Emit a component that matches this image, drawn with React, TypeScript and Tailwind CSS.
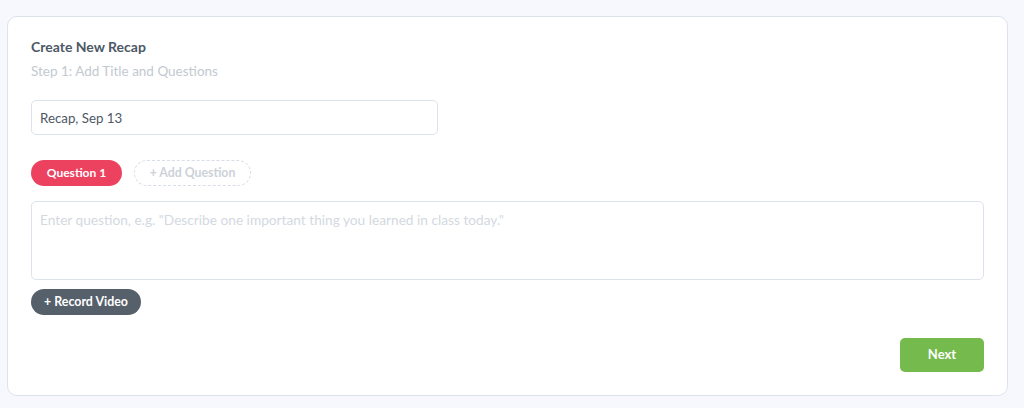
export default function App() {
  return (
    <div className="min-h-screen bg-[#f6f8fd] pl-[7px] pt-[16px] font-['Lato','Open_Sans',sans-serif]">
      <div className="w-[1001px] h-[380px] bg-white border border-[#dde3ec] rounded-[10px] px-[23px] pt-[22px] flex flex-col">
        {/* Header */}
        <h1 className="text-[14px] font-bold text-[#4d5866] leading-[16px]">Create New Recap</h1>
        <p className="text-[13.5px] text-[#c3c9d0] leading-[16px] mt-[8px]">Step 1: Add Title and Questions</p>

        {/* Title input */}
        <input
          defaultValue="Recap, Sep 13"
          className="mt-[21px] w-[407px] h-[35px] border border-[#dde3ec] rounded-[5px] px-[8px] text-[13.3px] text-[#4d5866] outline-none"
        />

        {/* Question tabs */}
        <div className="flex items-center gap-[12px] mt-[25px]">
          <button className="h-[26px] w-[91px] rounded-full bg-[#ec4260] text-white text-[12px] font-bold">
            Question 1
          </button>
          <button className="h-[26px] w-[117px] rounded-full border border-dashed border-[#d8dee6] text-[#ccd2d9] text-[12.3px] font-bold">
            + Add Question
          </button>
        </div>

        {/* Question textarea */}
        <textarea
          placeholder={'Enter question, e.g. "Describe one important thing you learned in class today."'}
          className="mt-[15px] w-[953px] h-[79px] border border-[#dde3ec] rounded-[5px] px-[8px] py-[8px] text-[13.7px] text-[#4d5866] placeholder:text-[#d3d9df] outline-none resize-none"
        />

        <button className="mt-[9px] h-[26px] w-[110px] rounded-full bg-[#56606b] text-white text-[12.4px] font-bold">
          + Record Video
        </button>

        <div className="flex justify-end mt-[23px]">
          <button className="h-[34px] w-[84px] rounded-[5px] bg-[#74ba4d] text-white text-[13px] font-bold">
            Next
          </button>
        </div>
      </div>
    </div>
  )
}
